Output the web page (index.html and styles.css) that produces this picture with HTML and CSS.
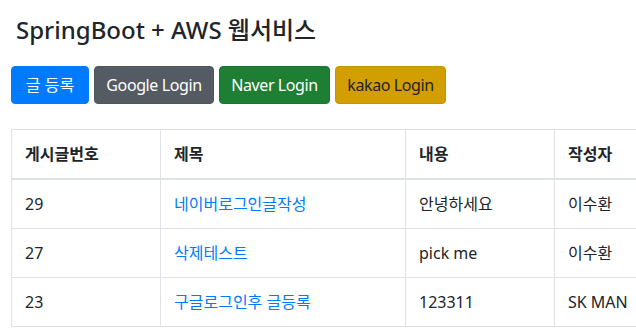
FILE: index.html
```html
<!DOCTYPE html>
<html lang="ko">
<head>
    <meta charset="UTF-8">
    <title>SpringBoot + AWS 웹서비스</title>
    <link rel="stylesheet" href="styles.css">
</head>
<body>
    <div class="page">
        <h1 class="title">SpringBoot + AWS 웹서비스</h1>

        <div class="actions">
            <a class="btn btn-primary">글 등록</a>
            <a class="btn btn-secondary">Google Login</a>
            <a class="btn btn-success">Naver Login</a>
            <a class="btn btn-warning">kakao Login</a>
        </div>

        <table class="posts">
            <colgroup>
                <col class="col-id">
                <col class="col-title">
                <col class="col-content">
                <col class="col-author">
            </colgroup>
            <thead>
                <tr>
                    <th>게시글번호</th>
                    <th>제목</th>
                    <th>내용</th>
                    <th>작성자</th>
                </tr>
            </thead>
            <tbody>
                <tr>
                    <td>29</td>
                    <td><a href="#">네이버로그인글작성</a></td>
                    <td>안녕하세요</td>
                    <td>이수환</td>
                </tr>
                <tr>
                    <td>27</td>
                    <td><a href="#">삭제테스트</a></td>
                    <td>pick me</td>
                    <td>이수환</td>
                </tr>
                <tr>
                    <td>23</td>
                    <td><a href="#">구글로그인후 글등록</a></td>
                    <td>123311</td>
                    <td>SK MAN</td>
                </tr>
            </tbody>
        </table>
    </div>
</body>
</html>
```

FILE: styles.css
```css
body {
    margin: 0;
    font-family: "Noto Sans", "Noto Sans CJK KR", sans-serif;
    font-size: 16px;
    color: #212529;
    background: #fff;
    overflow: hidden;
}
.page {
    padding: 16px 0 0 11px;
}
.title {
    margin: 0 0 21px 5px;
    font-size: 24px;
    font-weight: 500;
    line-height: 1.2;
}
.actions {
    display: flex;
    gap: 5px;
    margin-bottom: 25px;
}
.btn {
    display: inline-block;
    height: 38px;
    box-sizing: border-box;
    padding: 0;
    line-height: 36px;
    text-align: center;
    border: 1px solid transparent;
    border-radius: 4px;
    font-size: 16px;
    color: #fff;
    text-decoration: none;
    white-space: nowrap;
}
.btn-primary {
    width: 78px;
    background: #007bff;
    border-color: #007bff;
}
.btn-secondary {
    width: 120px;
    background: #545b62;
    border-color: #4e555b;
    letter-spacing: -0.4px;
}
.btn-success {
    width: 111px;
    background: #1e7e34;
    border-color: #1c7430;
    letter-spacing: -0.4px;
}
.btn-warning {
    width: 111px;
    background: #d39e00;
    border-color: #c69500;
    color: #212529;
    letter-spacing: -0.4px;
}
.posts {
    border-collapse: collapse;
    table-layout: fixed;
    width: 700px;
}
.col-id { width: 149px; }
.col-title { width: 245px; }
.col-content { width: 149px; }
.col-author { width: 157px; }
.posts th,
.posts td {
    border: 1px solid #dee2e6;
    padding: 12px 13px;
    text-align: left;
    line-height: 24px;
    white-space: nowrap;
}
.posts th {
    font-weight: 700;
}
.posts thead th {
    border-bottom: 2px solid #dee2e6;
}
.posts a {
    color: #007bff;
    text-decoration: none;
}
```
